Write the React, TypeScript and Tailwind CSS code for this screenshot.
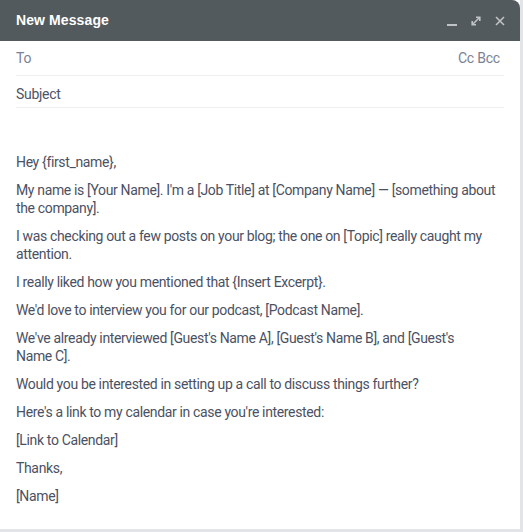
import React from "react";

const paras: string[][] = [
  ["Hey {first_name},"],
  ["My name is [Your Name]. I'm a [Job Title] at [Company Name] — [something about", "the company]."],
  ["I was checking out a few posts on your blog; the one on [Topic] really caught my", "attention."],
  ["I really liked how you mentioned that {Insert Excerpt}."],
  ["We'd love to interview you for our podcast, [Podcast Name]."],
  ["We've already interviewed [Guest's Name A], [Guest's Name B], and [Guest's", "Name C]."],
  ["Would you be interested in setting up a call to discuss things further?"],
  ["Here's a link to my calendar in case you're interested:"],
  ["[Link to Calendar]"],
  ["Thanks,"],
  ["[Name]"],
];

export default function App() {
  return (
    <div className="w-[523px] h-[532px] bg-white overflow-hidden" style={{ fontFamily: "Roboto, 'Liberation Sans', sans-serif" }}>
      <div className="w-[523px] h-[532px] border-r-[3px] border-b-[3px] border-[#e3e4e7] flex flex-col">
        <div className="h-[41px] bg-[#525a5d] rounded-tr-[8px] flex items-center pl-4 pr-[14px] shrink-0">
          <div className="text-white font-bold text-[14px] tracking-[0.1px]" style={{ fontFamily: "'Liberation Sans', Arial, sans-serif" }}>New Message</div>
          <div className="ml-auto flex items-center gap-[12px]">
            <svg width="12" height="12" viewBox="0 0 12 12"><rect x="1" y="9" width="10" height="2" fill="#bfc3c5" /></svg>
            <svg width="12" height="12" viewBox="0 0 12 12" fill="none" stroke="#bfc3c5" strokeWidth="1.6">
              <path d="M2.5 9.5 L9.5 2.5" />
              <path d="M6 2.2 H9.8 V6" />
              <path d="M2.2 6 V9.8 H6" />
            </svg>
            <svg width="12" height="12" viewBox="0 0 12 12" fill="none" stroke="#bfc3c5" strokeWidth="1.6">
              <path d="M2 2 L10 10 M10 2 L2 10" />
            </svg>
          </div>
        </div>
        <div className="px-4">
          <div className="h-[35px] flex items-center border-b border-[#eceef1] text-[14px] text-[#7b8194] tracking-[-0.2px]">
            <span className="pt-[1px]">To</span>
            <span className="ml-auto pt-[1px] pr-[4px]">Cc Bcc</span>
          </div>
          <div className="h-[32px] flex items-center border-b border-[#eceef1] text-[14px] text-[#4d5366] tracking-[-0.3px]">
            <span className="pt-[6px]">Subject</span>
          </div>
        </div>
        <div className="px-4 pt-[45px] flex flex-col gap-[10px] text-[14px] leading-[18px] text-[#4b5163] tracking-[-0.35px]">
          {paras.map((p, i) => (
            <p key={i}>
              {p.map((l, j) => (
                <span key={j} className="block whitespace-nowrap">{l}</span>
              ))}
            </p>
          ))}
        </div>
      </div>
    </div>
  );
}
